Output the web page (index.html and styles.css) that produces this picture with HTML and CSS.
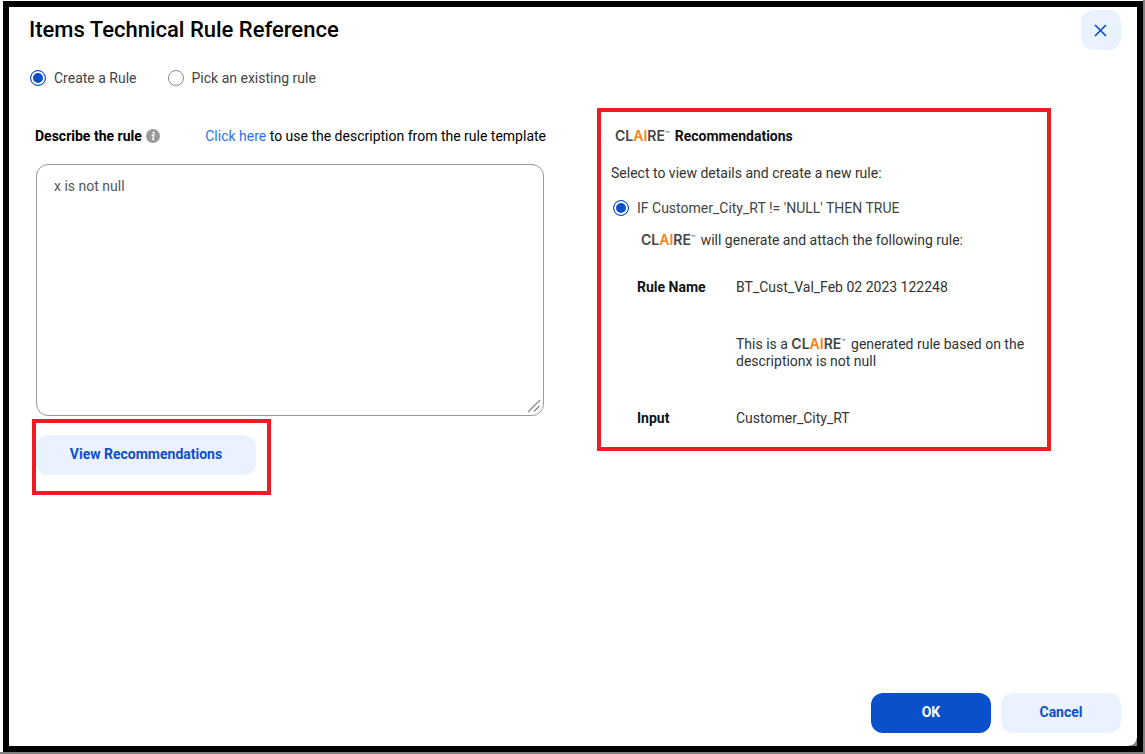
FILE: index.html
```html
<!DOCTYPE html>
<html lang="en">
<head>
<meta charset="utf-8">
<title>Items Technical Rule Reference</title>
<link rel="stylesheet" href="styles.css">
</head>
<body>
<main class="dialog">
  <header class="header">
    <h1 class="title">Items Technical Rule Reference</h1>
    <button class="button close" type="button" aria-label="Close">
      <svg width="14" height="14" viewBox="0 0 14 14" aria-hidden="true"><path d="M1 2l11 11M12 2L1 13" fill="none" stroke="currentColor" stroke-width="1.7"/></svg>
    </button>
  </header>

  <div class="modes">
    <label class="choice"><input class="radio" type="radio" name="mode" checked>Create a Rule</label>
    <label class="choice"><input class="radio" type="radio" name="mode">Pick an existing rule</label>
  </div>

  <div class="columns">
    <section class="describe">
      <div class="describe-head">
        <label class="describe-label" for="rule-text">Describe the rule</label>
        <svg class="info" width="14" height="14" viewBox="0 0 14 14" aria-hidden="true"><circle cx="7" cy="7" r="7" fill="#999"/><circle cx="7.7" cy="3.6" r="1.1" fill="#fff"/><path d="M5.6 6h2.2L6.9 10.6h1.3" fill="none" stroke="#fff" stroke-width="1.4"/></svg>
        <p class="hint"><a class="link" href="#">Click here</a> to use the description from the rule template</p>
      </div>
      <div class="text-wrap">
        <textarea class="text" id="rule-text">x is not null</textarea>
        <svg class="grip" width="14" height="14" viewBox="0 0 14 14" aria-hidden="true"><path d="M1 13L13 1M7 12.500L12.500 7" fill="none" stroke="#888" stroke-width="1.2"/></svg>
      </div>
      <div class="view-box">
        <button class="button view" type="button">View Recommendations</button>
      </div>
    </section>

    <section class="panel">
      <h2 class="panel-title"><span class="claire">CL<span class="ai">AI</span>RE<span class="tm">™</span></span> Recommendations</h2>
      <p class="panel-intro">Select to view details and create a new rule:</p>
      <label class="choice suggestion"><input class="radio" type="radio" name="suggestion" checked>IF Customer_City_RT != 'NULL' THEN TRUE</label>
      <p class="generate"><span class="claire">CL<span class="ai">AI</span>RE<span class="tm">™</span></span> will generate and attach the following rule:</p>
      <dl class="fields">
        <dt class="name">Rule Name</dt>
        <dd class="value">BT_Cust_Val_Feb 02 2023 122248</dd>
        <dd class="value note">This is a <span class="claire">CL<span class="ai">AI</span>RE<span class="tm">™</span></span> generated rule based on the descriptionx is not null</dd>
        <dt class="name">Input</dt>
        <dd class="value">Customer_City_RT</dd>
      </dl>
    </section>
  </div>

  <footer class="footer">
    <button class="button action primary" type="button">OK</button>
    <button class="button action" type="button">Cancel</button>
  </footer>
</main>
</body>
</html>
```
FILE: styles.css
```css
* { box-sizing: border-box; }

body {
  margin: 0;
  min-height: 100vh;
  display: flex;
  padding: 1px 0 0 3px;
  border: solid #808080;
  border-width: 0 2px 2px 0;
  background: #fff;
  color: #333;
  font: 14px/20px Roboto, sans-serif;
}

h1, h2, p, dl, dd { margin: 0; }

.dialog {
  flex: 1;
  display: flex;
  flex-direction: column;
  border: 6px solid #000;
  background: radial-gradient(circle at 0 0, #fff 7px, #808080 8px) right bottom / 8px 8px no-repeat;
}

.header {
  display: flex;
  justify-content: space-between;
  padding: 3px 16px 0 20px;
}

.title {
  color: #000;
  font-size: 22px;
  font-weight: 500;
  line-height: 40px;
}

.button {
  height: 40px;
  padding: 0 0 2px;
  border: 0;
  border-radius: 12px;
  background: #ebf2ff;
  color: #0b50cb;
  font: 700 14px/20px Roboto, sans-serif;
}

.close {
  width: 40px;
  display: flex;
  align-items: center;
  justify-content: center;
  padding: 0;
}

.modes {
  display: flex;
  gap: 31px;
  padding: 18px 21px 0;
}

.choice {
  display: flex;
  align-items: center;
  gap: 8px;
  color: #444;
}

.radio {
  appearance: none;
  flex: none;
  width: 16px;
  height: 16px;
  margin: 0;
  border: 1px solid #888;
  border-radius: 50%;
  background: #fff;
}

.radio:checked {
  border-color: #0b50cb;
  background: #0b50cb;
  box-shadow: inset 0 0 0 2px #fff;
}

.columns {
  display: grid;
  grid-template-columns: 514fr 454fr;
  align-items: start;
  gap: 51px;
  padding: 20px 86px 0 23px;
}

.describe-head {
  display: flex;
  align-items: center;
  padding: 18px 0 0 3px;
  color: #000;
}

.describe-label { font-weight: 700; }

.info { margin-left: 4px; }

.hint {
  margin-left: auto;
  white-space: nowrap;
}

.link {
  color: #2f73e8;
  text-decoration: none;
}

.text-wrap {
  position: relative;
  margin: 18px 2px 0 4px;
}

.text {
  display: block;
  width: 100%;
  height: 252px;
  padding: 11px 17px;
  border: 1px solid #999;
  border-radius: 12px;
  resize: none;
  color: #555;
  font: 14px/20px Roboto, sans-serif;
}

.grip {
  position: absolute;
  right: 3px;
  bottom: 3px;
}

.view-box {
  width: fit-content;
  margin-top: 3px;
  padding: 12px 11px 16px 0;
  border: 4px solid #ed1c24;
}

.view {
  display: block;
  width: 220px;
}

.panel {
  padding: 14px 12px 19px 10px;
  border: 4px solid #ed1c24;
}

.panel-title {
  padding-left: 4px;
  color: #111;
  font-size: 14px;
  font-weight: 700;
  line-height: 20px;
}

.claire {
  margin-right: 2px;
  color: #444;
  font: 600 14px/1 Inter, sans-serif;
}

.ai { color: #f58220; }

.tm {
  font-size: 7px;
  font-weight: 400;
  vertical-align: 4px;
}

.panel-intro { margin-top: 17px; }

.suggestion {
  margin-top: 15px;
  padding-left: 2px;
}

.generate {
  margin-top: 12px;
  padding-left: 30px;
}

.fields {
  display: grid;
  grid-template-columns: 99px 1fr;
  margin-top: 27px;
  padding-left: 26px;
}

.name {
  color: #111;
  font-weight: 700;
}

.note {
  grid-column: 2;
  margin: 39px 0 38px;
  line-height: 17px;
}

.footer {
  display: flex;
  justify-content: flex-end;
  gap: 10px;
  margin-top: auto;
  padding: 24px 16px 13px;
}

.action { width: 120px; }

.primary {
  background: #0b50cb;
  color: #fff;
}
```
